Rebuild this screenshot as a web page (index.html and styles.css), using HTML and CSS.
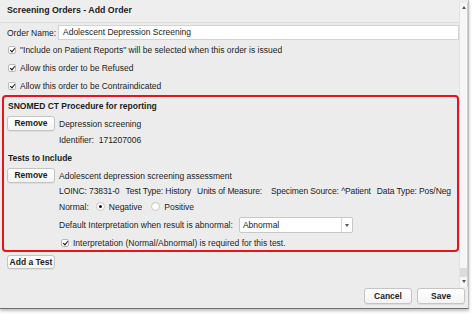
FILE: index.html
```html
<!DOCTYPE html>
<html>
<head>
<meta charset="utf-8">
<link rel="stylesheet" href="styles.css">
</head>
<body>
<div class="window">
  <div class="main">
    <div class="content">
      <div class="titlebar">Screening Orders - Add Order</div>
      <div class="name-row">
        <span class="label">Order Name:</span>
        <div class="input">Adolescent Depression Screening</div>
      </div>
      <div class="check-row"><span class="cb"></span><span>"Include on Patient Reports" will be selected when this order is issued</span></div>
      <div class="check-row"><span class="cb"></span><span>Allow this order to be Refused</span></div>
      <div class="check-row"><span class="cb"></span><span>Allow this order to be Contraindicated</span></div>

      <div class="redbox">
        <div class="heading">SNOMED CT Procedure for reporting</div>
        <div class="item">
          <div class="btn-col"><button class="btn btn-remove">Remove</button></div>
          <div class="lines">
            <div class="line first">Depression screening</div>
            <div class="line">Identifier:&nbsp; 171207006</div>
          </div>
        </div>
        <div class="heading h2">Tests to Include</div>
        <div class="item">
          <div class="btn-col"><button class="btn btn-remove">Remove</button></div>
          <div class="lines">
            <div class="line first">Adolescent depression screening assessment</div>
            <div class="line loinc"><span>LOINC: 73831-0</span><span>Test Type: History</span><span>Units of Measure:</span><span class="wide">Specimen Source: ^Patient</span><span>Data Type: Pos/Neg</span></div>
            <div class="line normal">
              <span>Normal:</span>
              <span class="radio on"></span><span>Negative</span>
              <span class="radio"></span><span>Positive</span>
            </div>
            <div class="line default">
              <span>Default Interpretation when result is abnormal:</span>
              <div class="select"><span class="sel-text">Abnormal</span><span class="sel-arrow"></span></div>
            </div>
            <div class="line interp"><span class="cb"></span><span>Interpretation (Normal/Abnormal) is required for this test.</span></div>
          </div>
        </div>
      </div>
      <div class="add-row"><button class="btn">Add a Test</button></div>
    </div>
    <div class="scrollbar">
      <span class="arrow up"></span>
      <span class="track"></span>
      <span class="thumb"></span>
      <span class="arrow down"></span>
    </div>
  </div>
  <div class="footer">
    <button class="btn btn-foot">Cancel</button>
    <button class="btn btn-foot">Save</button>
  </div>
</div>
</body>
</html>
```

FILE: styles.css
```css
* { box-sizing: border-box; }
html, body { margin: 0; padding: 0; }
body {
  width: 474px;
  height: 314px;
  background: #ffffff;
  font-family: "Liberation Sans", Arial, sans-serif;
  font-size: 8.5px;
  color: #1c1c1c;
  overflow: hidden;
}
.window {
  width: 469px;
  height: 309px;
  background: #ececec;
  border-bottom: 1px solid #6f6f6f;
  border-right: 1px solid #bdbdbd;
  box-shadow: 0 2px 3px rgba(0,0,0,0.25);
  display: flex;
  flex-direction: column;
}
.main {
  display: flex;
  height: 287px;
}
.content {
  width: 459px;
  display: flex;
  flex-direction: column;
}
.titlebar {
  height: 23px;
  line-height: 21px;
  padding-left: 7px;
  font-weight: bold;
  font-size: 8.8px;
  border-bottom: 1px solid #dedede;
  background: #eeeeee;
}
.name-row {
  display: flex;
  align-items: center;
  height: 15px;
  margin-top: 2px;
  padding-left: 7px;
}
.label { width: 51px; }
.input {
  flex: 1;
  height: 15px;
  background: #fff;
  border: 1px solid #d3d3d3;
  padding-left: 4px;
  line-height: 13px;
}
.check-row {
  display: flex;
  align-items: center;
  height: 18px;
  padding-left: 8px;
}
.name-row + .check-row { margin-top: 1px; }
.cb {
  width: 8px;
  height: 8px;
  background: #fff;
  border: 1px solid #b9b9b9;
  border-radius: 2px;
  margin-right: 4px;
  position: relative;
  flex: none;
}
.cb::after {
  content: "";
  position: absolute;
  left: 2px;
  top: 0px;
  width: 2px;
  height: 4px;
  border-right: 1.3px solid #111;
  border-bottom: 1.3px solid #111;
  transform: rotate(40deg);
}
.redbox {
  margin: 0 0 0 2px;
  border: 2px solid #e8141c;
  border-radius: 4px;
  padding: 2px 0 1px 3px;
  height: 157px;
}
.heading {
  font-weight: bold;
  height: 14px;
  line-height: 14px;
  padding-left: 1px;
}
.h2 { margin-top: 3px; }
.item {
  display: flex;
  margin-top: 3px;
}
.btn-col { width: 52px; flex: none; }
.btn {
  font-family: inherit;
  font-size: 8.5px;
  font-weight: bold;
  color: #1c1c1c;
  background: linear-gradient(#ffffff, #f3f3f3);
  border: 1px solid #c4c4c4;
  border-radius: 3px;
  box-shadow: 0 1px 0 rgba(0,0,0,0.06);
  padding: 0;
  margin: 0;
  cursor: default;
}
.btn-remove {
  width: 48px;
  height: 15px;
  line-height: 13px;
}
.lines { display: flex; flex-direction: column; }
.line {
  height: 17px;
  display: flex;
  align-items: center;
  white-space: nowrap;
}
.line.first { height: 15px; }
.loinc { height: 15px; letter-spacing: -0.1px; }
.loinc span + span { margin-left: 6px; }
.loinc span.wide { margin-left: 9px; }
.normal { height: 17px; }
.normal span:first-child { margin-right: 7px; }
.radio {
  width: 9px;
  height: 9px;
  border-radius: 50%;
  background: #fff;
  border: 1px solid #c4c4c4;
  margin-right: 4px;
  position: relative;
  flex: none;
}
.radio.on::after {
  content: "";
  position: absolute;
  left: 2px;
  top: 2px;
  width: 3px;
  height: 3px;
  border-radius: 50%;
  background: #111;
}
.normal .radio + span { margin-right: 9px; }
.default { height: 19px; }
.select {
  margin-left: 6px;
  width: 114px;
  height: 16px;
  background: #fff;
  border: 1px solid #c8c8c8;
  border-radius: 2px;
  display: flex;
  align-items: center;
}
.sel-text { flex: 1; padding-left: 3px; }
.sel-arrow {
  width: 11px;
  height: 100%;
  border-left: 1px solid #d6d6d6;
  position: relative;
}
.sel-arrow::after {
  content: "";
  position: absolute;
  left: 3px;
  top: 6px;
  border-left: 2.5px solid transparent;
  border-right: 2.5px solid transparent;
  border-top: 3px solid #555;
}
.interp { height: 17px; padding-left: 2px; }
.add-row {
  padding-left: 7px;
  margin-top: 3px;
}
.add-row .btn {
  width: 48px;
  height: 14px;
  line-height: 12px;
}
.scrollbar {
  width: 9px;
  margin-top: 3px;
  height: 284px;
  background: #f6f6f6;
  border-left: 1px solid #e2e2e2;
  border-right: 1px solid #cfcfcf;
  display: flex;
  flex-direction: column;
  align-items: center;
}
.arrow {
  width: 0; height: 0;
  border-left: 2px solid transparent;
  border-right: 2px solid transparent;
  flex: none;
}
.arrow.up { border-bottom: 3px solid #555; margin-top: 3px; }
.arrow.down { border-top: 3px solid #555; margin-bottom: 4px; }
.track { flex: 1; }
.thumb {
  width: 7px;
  height: 9px;
  background: #dcdcdc;
  margin-bottom: 3px;
}
.footer {
  display: flex;
  justify-content: flex-end;
  gap: 5px;
  padding: 1px 3px 0 0;
}
.btn-foot {
  width: 48px;
  height: 16px;
  line-height: 14px;
}
```
